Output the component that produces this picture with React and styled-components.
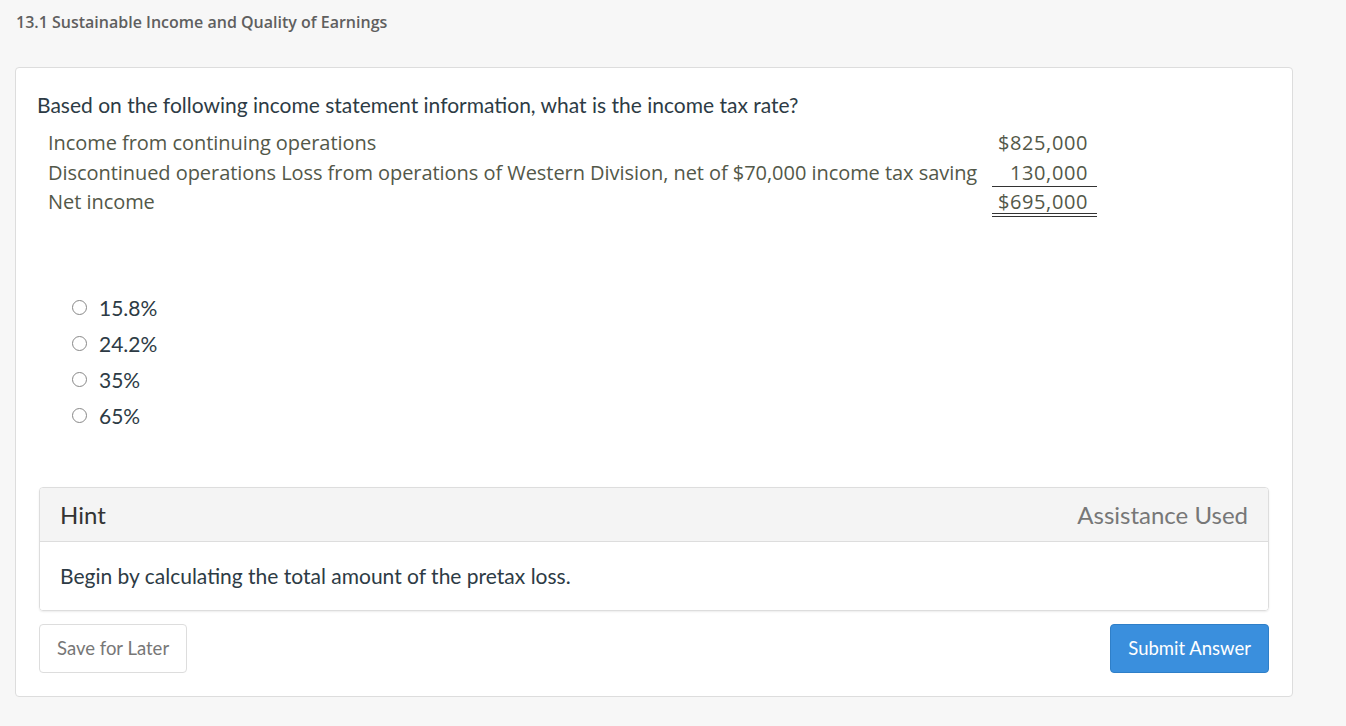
import React from "react";
import styled, { createGlobalStyle } from "styled-components";

const GlobalStyle = createGlobalStyle`
  html, body {
    margin: 0;
    padding: 0;
    background: #f7f7f7;
  }
  body {
    font-family: "Lato", "Liberation Sans", sans-serif;
    color: #2d3b45;
  }
`;

const Page = styled.div`
  padding: 0 53px 28px 15px;
`;

const Title = styled.h1`
  margin: 0;
  padding: 12px 0 0 1px;
  height: 67px;
  box-sizing: border-box;
  font-family: "Open Sans", "Liberation Sans", sans-serif;
  font-size: 16px;
  font-weight: 600;
  color: #5f5f5f;
  line-height: 20px;
`;

const Card = styled.div`
  background: #fff;
  border: 1px solid #ddd;
  border-radius: 4px;
  padding: 23px;
`;

const Question = styled.p`
  margin: 0 0 9px -2px;
  font-size: 21px;
  line-height: 28px;
  font-weight: 400;
`;

const Statement = styled.div`
  display: grid;
  grid-template-columns: 1fr 105px;
  width: 1049px;
  margin-left: 9px;
  font-family: "Open Sans", "Liberation Sans", sans-serif;
  font-size: 20px;
  color: #535849;
  letter-spacing: -0.05px;
`;

const Label = styled.div`
  height: 29.5px;
  line-height: 29px;
  white-space: nowrap;
`;

const Amount = styled.div`
  height: 29.5px;
  line-height: 29px;
  box-sizing: border-box;
  text-align: right;
  padding-right: 9px;
  letter-spacing: 0.6px;
  border-bottom: ${({ $rule }) =>
    $rule === "single" ? "1.5px solid #333" : $rule === "double" ? "4px double #333" : "none"};
`;

const Options = styled.div`
  display: flex;
  flex-direction: column;
  margin: 73px 0 53px 0;
`;

const Option = styled.label`
  display: flex;
  align-items: center;
  height: 36px;
  padding-left: 33px;
  font-size: 21px;
  color: #2d3b45;
  cursor: pointer;
`;

const Radio = styled.span`
  width: 13px;
  height: 13px;
  border: 1.5px solid #888;
  border-radius: 50%;
  margin-right: 12px;
  flex-shrink: 0;
`;

const HintBox = styled.div`
  border: 1px solid #ddd;
  border-radius: 4px;
  box-shadow: 0 1px 2px rgba(0, 0, 0, 0.08);
  overflow: hidden;
`;

const HintHeader = styled.div`
  display: flex;
  justify-content: space-between;
  align-items: center;
  height: 53px;
  padding: 0 20px;
  background: #f4f4f4;
  border-bottom: 1px solid #ddd;
  font-size: 24px;
`;

const HintTitle = styled.span`
  color: #333;
`;

const HintStatus = styled.span`
  color: #777;
`;

const HintBody = styled.div`
  display: flex;
  align-items: center;
  height: 68px;
  padding: 0 20px;
  background: #fff;
  font-size: 21px;
  color: #2d3b45;
`;

const Actions = styled.div`
  display: flex;
  justify-content: space-between;
  margin-top: 13px;
`;

const Button = styled.button`
  height: 49px;
  padding: 0 17px;
  font-family: "Lato", "Liberation Sans", sans-serif;
  font-size: 18.5px;
  border-radius: 4px;
  cursor: pointer;
  border: 1px solid ${({ $primary }) => ($primary ? "#2f7fc8" : "#ddd")};
  background: ${({ $primary }) => ($primary ? "#3a8fdd" : "#fff")};
  color: ${({ $primary }) => ($primary ? "#fff" : "#777")};
`;

const rows = [
  { label: "Income from continuing operations", amount: "$825,000" },
  {
    label:
      "Discontinued operations Loss from operations of Western Division, net of $70,000 income tax saving",
    amount: "130,000",
    rule: "single",
  },
  { label: "Net income", amount: "$695,000", rule: "double" },
];

const choices = ["15.8%", "24.2%", "35%", "65%"];

export default function App() {
  return (
    <>
      <GlobalStyle />
      <Page>
        <Title>13.1 Sustainable Income and Quality of Earnings</Title>
        <Card>
          <Question>
            Based on the following income statement information, what is the income tax rate?
          </Question>
          <Statement>
            {rows.map((r) => (
              <React.Fragment key={r.label}>
                <Label>{r.label}</Label>
                <Amount $rule={r.rule}>{r.amount}</Amount>
              </React.Fragment>
            ))}
          </Statement>
          <Options>
            {choices.map((c) => (
              <Option key={c}>
                <Radio />
                {c}
              </Option>
            ))}
          </Options>
          <HintBox>
            <HintHeader>
              <HintTitle>Hint</HintTitle>
              <HintStatus>Assistance Used</HintStatus>
            </HintHeader>
            <HintBody>Begin by calculating the total amount of the pretax loss.</HintBody>
          </HintBox>
          <Actions>
            <Button>Save for Later</Button>
            <Button $primary>Submit Answer</Button>
          </Actions>
        </Card>
      </Page>
    </>
  );
}
